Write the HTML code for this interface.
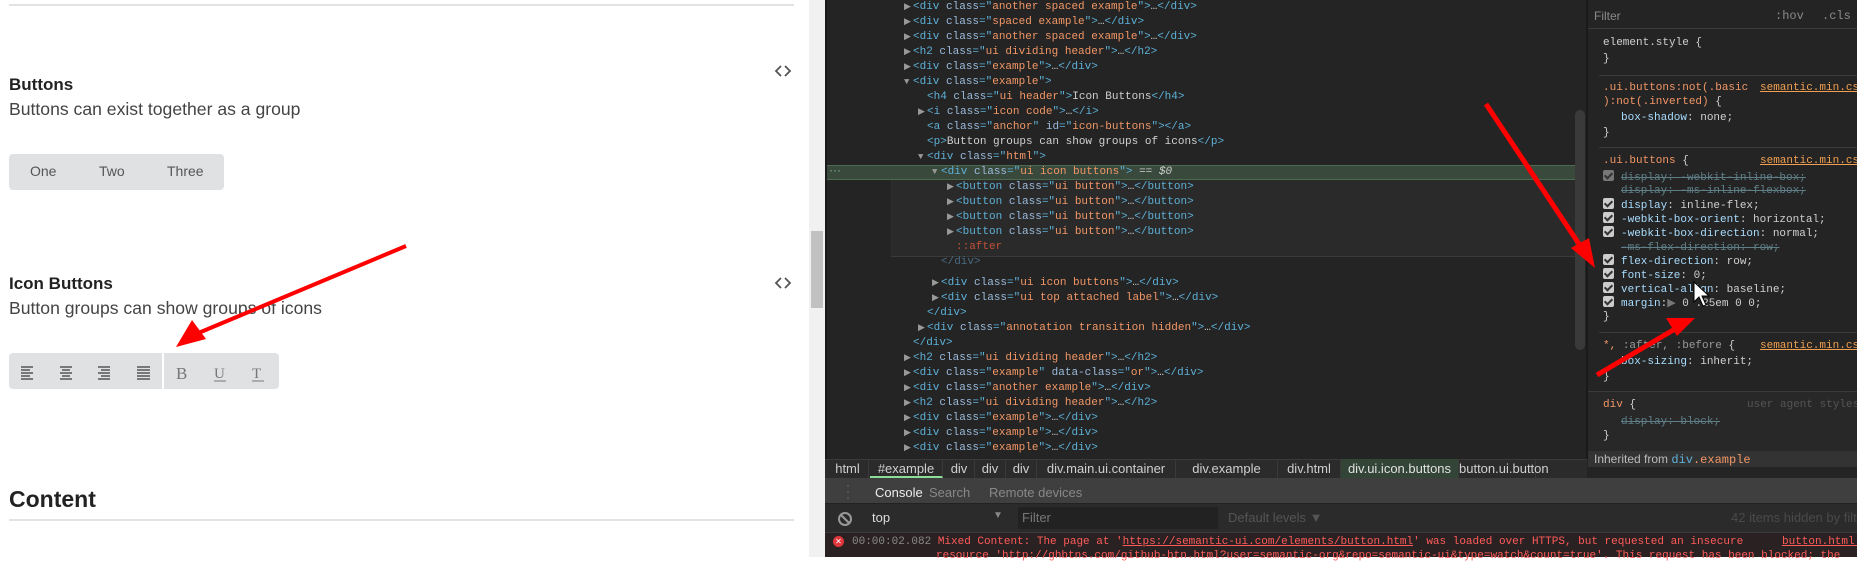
<!DOCTYPE html>
<html><head><meta charset="utf-8"><style>
*{margin:0;padding:0;box-sizing:border-box}
body{width:1857px;height:557px;overflow:hidden;position:relative;background:#fff;font-family:"Liberation Sans",sans-serif}
.a{position:absolute;white-space:nowrap}
.m{font-family:"Liberation Mono",monospace;font-size:11px;line-height:15px}
.t{color:#5db0d7}.n{color:#9bbbdc}.v{color:#f29766}.x{color:#cfd0d0}
.ar{color:#9a9a9a;font-size:9px;position:absolute;left:-9px;top:0}
.btn{position:absolute;background:#e0e1e2;color:#666}
.bc{position:absolute;top:459px;height:19px;line-height:19px;font-size:13px;color:#cfcfcf;border-right:1px solid #3a3a3a;text-align:center}
.sp{color:#a9dcfe}
.cb{display:inline-block;width:11px;height:11px;background:#ccc;border-radius:2px;vertical-align:-1px;margin-right:7px;position:relative}
.cb:after{content:"";position:absolute;left:3px;top:1px;width:3px;height:6px;border:solid #333;border-width:0 2px 2px 0;transform:rotate(45deg)}
</style></head><body>
<!-- left page -->
<div class="a" style="left:9px;top:4px;width:785px;height:2px;background:#e3e3e3"></div>
<div class="a" style="left:9px;top:75px;font-size:17px;font-weight:bold;color:#222">Buttons</div>
<div class="a" style="left:9px;top:99px;font-size:17.6px;color:#444">Buttons can exist together as a group</div>
<svg class="a" style="left:774px;top:64px" width="18" height="14"><path d="M7 2L2 7L7 12M11 2L16 7L11 12" fill="none" stroke="#555" stroke-width="1.8"/></svg>
<div class="btn" style="left:9px;top:154px;width:215px;height:36px;border-radius:4px"></div>
<div class="a" style="left:30px;top:163px;font-size:14px;color:#555">One</div>
<div class="a" style="left:99px;top:163px;font-size:14px;color:#555">Two</div>
<div class="a" style="left:167px;top:163px;font-size:14px;color:#555">Three</div>
<div class="a" style="left:9px;top:274px;font-size:17px;font-weight:bold;color:#222">Icon Buttons</div>
<div class="a" style="left:9px;top:298px;font-size:17.6px;color:#444">Button groups can show groups of icons</div>
<svg class="a" style="left:774px;top:276px" width="18" height="14"><path d="M7 2L2 7L7 12M11 2L16 7L11 12" fill="none" stroke="#555" stroke-width="1.8"/></svg>
<div class="btn" style="left:9px;top:353px;width:153px;height:36px;border-radius:4px 0 0 4px"></div>
<div class="btn" style="left:164px;top:353px;width:115px;height:36px;border-radius:0 4px 4px 0"></div>
<svg class="a" style="left:0;top:340px" width="300" height="60">
<g stroke="#555" stroke-width="1.6">
<path d="M21 27h12M21 30h9M21 33h12M21 36h9M21 39h12"/>
<path d="M60 27h12M62 30h8M60 33h12M62 36h8M60 39h12"/>
<path d="M98 27h12M101 30h9M98 33h12M101 36h9M98 39h12"/>
<path d="M137 27h13M137 30h13M137 33h13M137 36h13M137 39h13"/>
</g>
<text x="176" y="39" font-family="Liberation Serif" font-size="17" fill="#777">B</text>
<text x="214" y="38" font-family="Liberation Serif" font-size="15" fill="#777">U</text>
<path d="M214 41h12" stroke="#777" stroke-width="1"/>
<text x="252" y="38" font-family="Liberation Serif" font-size="15" fill="#777">T</text>
<path d="M252 41h12" stroke="#777" stroke-width="1"/>
</svg>
<div class="a" style="left:9px;top:486px;font-size:23px;font-weight:bold;color:#222">Content</div>
<div class="a" style="left:9px;top:519px;width:785px;height:2px;background:#e3e3e3"></div>
<div class="a" style="left:809px;top:0;width:16px;height:557px;background:#f1f1f1"></div>
<div class="a" style="left:811px;top:231px;width:12px;height:77px;background:#c1c1c1"></div>
<svg class="a" style="left:0;top:0" width="825" height="557"><path d="M406 246L196 334" stroke="#f00" stroke-width="4"/><path d="M176 347L192 320L206 339Z" fill="#f00"/></svg>

<!-- devtools -->
<div class="a" style="left:825px;top:0;width:1032px;height:557px;background:#242424"></div>
<div class="a" style="left:825px;top:0;width:2px;height:459px;background:#1a1a1a"></div>
<div class="a" style="left:827px;top:165px;width:748px;height:15px;background:#39493c;border-top:1px solid #4b6a50;border-bottom:1px solid #4b6a50"></div>
<div class="a" style="left:829px;top:163px;color:#7fb88a;font-size:12px">···</div>
<div class="a" style="left:891px;top:180px;width:684px;height:77px;background:#2a2a2a;border-bottom:1px solid #3a3a3a;border-left:1px solid #2e2e2e"></div>
<div class="a" style="left:1575px;top:110px;width:10px;height:240px;background:#3a3a3a;border-radius:5px"></div>
<div class="a m" style="left:913px;top:0"><span class="ar">▶</span><span class="t">&lt;div </span><span class="n">class</span><span class="t">="</span><span class="v">another spaced example</span><span class="t">"&gt;</span><span class="x">…</span><span class="t">&lt;/div&gt;</span></div>
<div class="a m" style="left:913px;top:15px"><span class="ar">▶</span><span class="t">&lt;div </span><span class="n">class</span><span class="t">="</span><span class="v">spaced example</span><span class="t">"&gt;</span><span class="x">…</span><span class="t">&lt;/div&gt;</span></div>
<div class="a m" style="left:913px;top:30px"><span class="ar">▶</span><span class="t">&lt;div </span><span class="n">class</span><span class="t">="</span><span class="v">another spaced example</span><span class="t">"&gt;</span><span class="x">…</span><span class="t">&lt;/div&gt;</span></div>
<div class="a m" style="left:913px;top:45px"><span class="ar">▶</span><span class="t">&lt;h2 </span><span class="n">class</span><span class="t">="</span><span class="v">ui dividing header</span><span class="t">"&gt;</span><span class="x">…</span><span class="t">&lt;/h2&gt;</span></div>
<div class="a m" style="left:913px;top:60px"><span class="ar">▶</span><span class="t">&lt;div </span><span class="n">class</span><span class="t">="</span><span class="v">example</span><span class="t">"&gt;</span><span class="x">…</span><span class="t">&lt;/div&gt;</span></div>
<div class="a m" style="left:913px;top:75px"><span class="ar">▼</span><span class="t">&lt;div </span><span class="n">class</span><span class="t">="</span><span class="v">example</span><span class="t">"&gt;</span></div>
<div class="a m" style="left:927px;top:90px"><span class="t">&lt;h4 </span><span class="n">class</span><span class="t">="</span><span class="v">ui header</span><span class="t">"&gt;</span><span class="x">Icon Buttons</span><span class="t">&lt;/h4&gt;</span></div>
<div class="a m" style="left:927px;top:105px"><span class="ar">▶</span><span class="t">&lt;i </span><span class="n">class</span><span class="t">="</span><span class="v">icon code</span><span class="t">"&gt;</span><span class="x">…</span><span class="t">&lt;/i&gt;</span></div>
<div class="a m" style="left:927px;top:120px"><span class="t">&lt;a </span><span class="n">class</span><span class="t">="</span><span class="v">anchor</span><span class="t">" </span><span class="n">id</span><span class="t">="</span><span class="v">icon-buttons</span><span class="t">"&gt;&lt;/a&gt;</span></div>
<div class="a m" style="left:927px;top:135px"><span class="t">&lt;p&gt;</span><span class="x">Button groups can show groups of icons</span><span class="t">&lt;/p&gt;</span></div>
<div class="a m" style="left:927px;top:150px"><span class="ar">▼</span><span class="t">&lt;div </span><span class="n">class</span><span class="t">="</span><span class="v">html</span><span class="t">"&gt;</span></div>
<div class="a m" style="left:941px;top:165px"><span class="ar">▼</span><span class="t">&lt;div </span><span class="n">class</span><span class="t">="</span><span class="v">ui icon buttons</span><span class="t">"&gt;</span><span class="x"> == <i>$0</i></span></div>
<div class="a m" style="left:956px;top:180px"><span class="ar">▶</span><span class="t">&lt;button </span><span class="n">class</span><span class="t">="</span><span class="v">ui button</span><span class="t">"&gt;</span><span class="x">…</span><span class="t">&lt;/button&gt;</span></div>
<div class="a m" style="left:956px;top:195px"><span class="ar">▶</span><span class="t">&lt;button </span><span class="n">class</span><span class="t">="</span><span class="v">ui button</span><span class="t">"&gt;</span><span class="x">…</span><span class="t">&lt;/button&gt;</span></div>
<div class="a m" style="left:956px;top:210px"><span class="ar">▶</span><span class="t">&lt;button </span><span class="n">class</span><span class="t">="</span><span class="v">ui button</span><span class="t">"&gt;</span><span class="x">…</span><span class="t">&lt;/button&gt;</span></div>
<div class="a m" style="left:956px;top:225px"><span class="ar">▶</span><span class="t">&lt;button </span><span class="n">class</span><span class="t">="</span><span class="v">ui button</span><span class="t">"&gt;</span><span class="x">…</span><span class="t">&lt;/button&gt;</span></div>
<div class="a m" style="left:956px;top:240px;color:#c0503a">::after</div>
<div class="a m" style="left:941px;top:255px;color:#4a6a80">&lt;/div&gt;</div>
<div class="a m" style="left:941px;top:276px"><span class="ar">▶</span><span class="t">&lt;div </span><span class="n">class</span><span class="t">="</span><span class="v">ui icon buttons</span><span class="t">"&gt;</span><span class="x">…</span><span class="t">&lt;/div&gt;</span></div>
<div class="a m" style="left:941px;top:291px"><span class="ar">▶</span><span class="t">&lt;div </span><span class="n">class</span><span class="t">="</span><span class="v">ui top attached label</span><span class="t">"&gt;</span><span class="x">…</span><span class="t">&lt;/div&gt;</span></div>
<div class="a m" style="left:927px;top:306px"><span class="t">&lt;/div&gt;</span></div>
<div class="a m" style="left:927px;top:321px"><span class="ar">▶</span><span class="t">&lt;div </span><span class="n">class</span><span class="t">="</span><span class="v">annotation transition hidden</span><span class="t">"&gt;</span><span class="x">…</span><span class="t">&lt;/div&gt;</span></div>
<div class="a m" style="left:913px;top:336px"><span class="t">&lt;/div&gt;</span></div>
<div class="a m" style="left:913px;top:351px"><span class="ar">▶</span><span class="t">&lt;h2 </span><span class="n">class</span><span class="t">="</span><span class="v">ui dividing header</span><span class="t">"&gt;</span><span class="x">…</span><span class="t">&lt;/h2&gt;</span></div>
<div class="a m" style="left:913px;top:366px"><span class="ar">▶</span><span class="t">&lt;div </span><span class="n">class</span><span class="t">="</span><span class="v">example</span><span class="t">" </span><span class="n">data-class</span><span class="t">="</span><span class="v">or</span><span class="t">"&gt;</span><span class="x">…</span><span class="t">&lt;/div&gt;</span></div>
<div class="a m" style="left:913px;top:381px"><span class="ar">▶</span><span class="t">&lt;div </span><span class="n">class</span><span class="t">="</span><span class="v">another example</span><span class="t">"&gt;</span><span class="x">…</span><span class="t">&lt;/div&gt;</span></div>
<div class="a m" style="left:913px;top:396px"><span class="ar">▶</span><span class="t">&lt;h2 </span><span class="n">class</span><span class="t">="</span><span class="v">ui dividing header</span><span class="t">"&gt;</span><span class="x">…</span><span class="t">&lt;/h2&gt;</span></div>
<div class="a m" style="left:913px;top:411px"><span class="ar">▶</span><span class="t">&lt;div </span><span class="n">class</span><span class="t">="</span><span class="v">example</span><span class="t">"&gt;</span><span class="x">…</span><span class="t">&lt;/div&gt;</span></div>
<div class="a m" style="left:913px;top:426px"><span class="ar">▶</span><span class="t">&lt;div </span><span class="n">class</span><span class="t">="</span><span class="v">example</span><span class="t">"&gt;</span><span class="x">…</span><span class="t">&lt;/div&gt;</span></div>
<div class="a m" style="left:913px;top:441px"><span class="ar">▶</span><span class="t">&lt;div </span><span class="n">class</span><span class="t">="</span><span class="v">example</span><span class="t">"&gt;</span><span class="x">…</span><span class="t">&lt;/div&gt;</span></div>

<!-- styles panel -->
<div class="a" style="left:1586px;top:0;width:271px;height:459px;background:#242424;border-left:2px solid #1a1a1a"></div>
<div class="a" style="left:1588px;top:0;width:269px;height:29px;border-bottom:1px solid #3a3a3a"></div>
<div class="a" style="left:1594px;top:9px;font-size:12px;color:#8a8a8a">Filter</div>
<div class="a" style="left:1775px;top:9px;font-size:12px;color:#8a8a8a;font-family:'Liberation Mono',monospace">:hov</div>
<div class="a" style="left:1822px;top:9px;font-size:12px;color:#8a8a8a;font-family:'Liberation Mono',monospace">.cls</div>
<div class="a m x" style="left:1603px;top:36px">element.style {</div>
<div class="a m x" style="left:1603px;top:52px">}</div>
<div class="a" style="left:1599px;top:75px;width:258px;height:1px;background:#3a3a3a"></div>
<div class="a m" style="left:1603px;top:81px;color:#f29766">.ui.buttons:not(.basic</div>
<div class="a m" style="left:1603px;top:95px"><span style="color:#f29766">):not(.inverted)</span><span class="x"> {</span></div>
<div class="a m" style="left:1760px;top:81px;color:#f0a050;text-decoration:underline">semantic.min.css</div>
<div class="a m" style="left:1621px;top:111px"><span class="sp">box-shadow</span><span class="x">: none;</span></div>
<div class="a m x" style="left:1603px;top:126px">}</div>
<div class="a" style="left:1599px;top:147px;width:258px;height:1px;background:#3a3a3a"></div>
<div class="a m" style="left:1603px;top:154px"><span style="color:#f29766">.ui.buttons</span><span class="x"> {</span></div>
<div class="a m" style="left:1760px;top:154px;color:#f0a050;text-decoration:underline">semantic.min.css</div>
<div class="a m" style="left:1603px;top:170px;color:#5f7f88;text-decoration:line-through"><span class="cb" style="background:#777"></span>display: -webkit-inline-box;</div>
<div class="a m" style="left:1621px;top:184px;color:#5f7f88;text-decoration:line-through">display: -ms-inline-flexbox;</div>
<div class="a m" style="left:1603px;top:198px"><span class="cb"></span><span class="sp">display</span><span class="x">: inline-flex;</span></div>
<div class="a m" style="left:1603px;top:212px"><span class="cb"></span><span class="sp">-webkit-box-orient</span><span class="x">: horizontal;</span></div>
<div class="a m" style="left:1603px;top:226px"><span class="cb"></span><span class="sp">-webkit-box-direction</span><span class="x">: normal;</span></div>
<div class="a m" style="left:1621px;top:241px;color:#5f7f88;text-decoration:line-through">-ms-flex-direction: row;</div>
<div class="a m" style="left:1603px;top:254px"><span class="cb"></span><span class="sp">flex-direction</span><span class="x">: row;</span></div>
<div class="a m" style="left:1603px;top:268px"><span class="cb"></span><span class="sp">font-size</span><span class="x">: 0;</span></div>
<div class="a m" style="left:1603px;top:282px"><span class="cb"></span><span class="sp">vertical-align</span><span class="x">: baseline;</span></div>
<div class="a m" style="left:1603px;top:296px"><span class="cb"></span><span class="sp">margin</span><span class="x">:<span style="color:#777">▶</span> 0 .25em 0 0;</span></div>
<div class="a m x" style="left:1603px;top:310px">}</div>
<div class="a" style="left:1599px;top:332px;width:258px;height:1px;background:#3a3a3a"></div>
<div class="a m" style="left:1603px;top:339px"><span style="color:#f29766">*, </span><span style="color:#999">:after, :before</span><span class="x"> {</span></div>
<div class="a m" style="left:1760px;top:339px;color:#f0a050;text-decoration:underline">semantic.min.css</div>
<div class="a m" style="left:1621px;top:355px"><span class="sp">box-sizing</span><span class="x">: inherit;</span></div>
<div class="a m x" style="left:1603px;top:370px">}</div>
<div class="a" style="left:1588px;top:391px;width:269px;height:60px;background:#282828;border-top:1px solid #3a3a3a"></div>
<div class="a m" style="left:1603px;top:398px;color:#f29766">div <span class="x">{</span></div>
<div class="a m" style="left:1747px;top:398px;color:#555">user agent stylesheet</div>
<div class="a m" style="left:1621px;top:415px;color:#5f7f88;text-decoration:line-through">display: block;</div>
<div class="a m x" style="left:1603px;top:429px">}</div>
<div class="a" style="left:1588px;top:451px;width:269px;height:16px;background:#333"></div>
<div class="a" style="left:1594px;top:451px;font-size:12px;line-height:16px;color:#bbb">Inherited from <span style="font-family:'Liberation Mono',monospace;color:#5db0d7">div<span style="color:#f29766">.example</span></span></div>

<!-- breadcrumb -->
<div class="a" style="left:825px;top:459px;width:762px;height:19px;background:#2b2b2b;border-top:1px solid #3a3a3a"></div>
<div class="bc" style="left:827px;width:42px">html</div>
<div class="bc" style="left:870px;width:73px;border-bottom:2px solid #8ddc9a">#example</div>
<div class="bc" style="left:944px;width:31px">div</div>
<div class="bc" style="left:975px;width:31px">div</div>
<div class="bc" style="left:1006px;width:31px">div</div>
<div class="bc" style="left:1037px;width:139px">div.main.ui.container</div>
<div class="bc" style="left:1176px;width:102px">div.example</div>
<div class="bc" style="left:1278px;width:63px">div.html</div>
<div class="bc" style="left:1341px;width:118px;background:#334536;color:#e0e0e0">div.ui.icon.buttons</div>
<div class="bc" style="left:1459px;width:77px">button.ui.button</div>
<!-- console -->
<div class="a" style="left:825px;top:478px;width:1032px;height:26px;background:#3f3f3f;border-bottom:1px solid #222"></div>
<div class="a" style="left:846px;top:482px;color:#777;font-size:12px;line-height:6px">·<br>·<br>·</div>
<div class="a" style="left:875px;top:485px;font-size:13px;color:#eee">Console</div>
<div class="a" style="left:929px;top:485px;font-size:13px;color:#888">Search</div>
<div class="a" style="left:989px;top:485px;font-size:13px;color:#888">Remote devices</div>
<div class="a" style="left:825px;top:504px;width:1032px;height:29px;background:#2b2b2b;border-bottom:1px solid #3a3a3a"></div>
<svg class="a" style="left:837px;top:511px" width="16" height="16"><circle cx="8" cy="8" r="6" fill="none" stroke="#999" stroke-width="2"/><path d="M4 4L12 12" stroke="#999" stroke-width="2"/></svg>
<div class="a" style="left:872px;top:510px;font-size:13px;color:#ddd">top</div>
<div class="a" style="left:993px;top:510px;font-size:10px;color:#888">▼</div>
<div class="a" style="left:1018px;top:507px;width:200px;height:22px;background:#222"></div>
<div class="a" style="left:1022px;top:510px;font-size:13px;color:#777">Filter</div>
<div class="a" style="left:1228px;top:510px;font-size:13px;color:#555">Default levels ▼</div>
<div class="a" style="left:1731px;top:510px;font-size:13px;color:#4a4a4a">42 items hidden by filter</div>
<div class="a" style="left:825px;top:533px;width:1032px;height:24px;background:#2a2222"></div>
<div class="a" style="left:833px;top:536px;width:11px;height:11px;border-radius:50%;background:#e0363c;color:#fff;font-size:8px;line-height:11px;text-align:center">✕</div>
<div class="a m" style="left:852px;top:535px;color:#8a8a8a">00:00:02.082 <span style="color:#ff5a5a">Mixed Content: The page at '<u>https://semantic-ui.com/elements/button.html</u>' was loaded over HTTPS, but requested an insecure</span></div>
<div class="a m" style="left:1782px;top:535px;color:#ff5a5a;text-decoration:underline">button.html:1</div>
<div class="a m" style="left:936px;top:549px;color:#ff5a5a">resource 'http://ghbtns.com/github-btn.html?user=semantic-org&amp;repo=semantic-ui&amp;type=watch&amp;count=true'. This request has been blocked; the</div>
<!-- arrows -->
<svg class="a" style="left:1450px;top:90px" width="300" height="300">
<path d="M36 14L133 160" stroke="#f00" stroke-width="5"/><path d="M145 178L121 158L139 148Z" fill="#f00"/>
<path d="M147 285L230 236" stroke="#f00" stroke-width="5"/><path d="M245 228L216 228L227 246Z" fill="#f00"/>
</svg>
<svg class="a" style="left:1692px;top:280px" width="20" height="30"><path d="M2 2L2 22L7 17L11 26L14 25L10 16L17 16Z" fill="#fff" stroke="#000" stroke-width="1"/></svg>
</body></html>
